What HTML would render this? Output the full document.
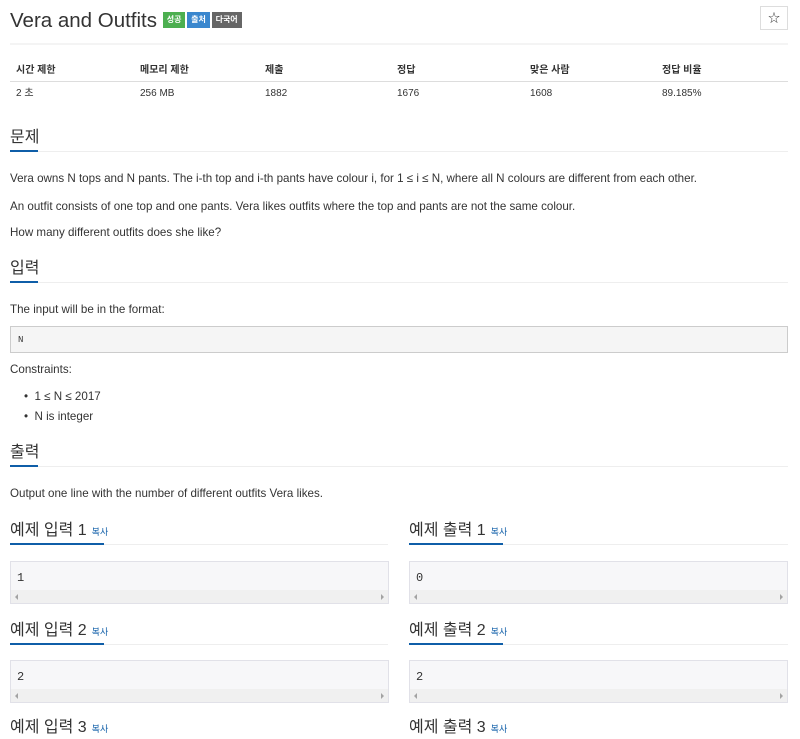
<!DOCTYPE html>
<html><head><meta charset="utf-8"><style>
*{margin:0;padding:0;box-sizing:border-box}
body{width:800px;height:726px;overflow:hidden;background:#fff;position:relative;font-family:"Liberation Sans","Noto Sans CJK KR",sans-serif;color:#333;font-size:12px}
.a{position:absolute;white-space:nowrap;line-height:1.2}
.h{font-size:16px;color:#333;line-height:20px}
.ul{position:absolute;height:1px;background:#eee}
.bl{position:absolute;height:2px;background:#0f5ea8}
.p{font-size:11.6px;color:#333;line-height:14px}
.box{position:absolute;background:#f7f7f9;border:1px solid #e1e1e8}
.box .sb{position:absolute;left:0;right:0;bottom:0;height:13px;background:#f0f0f0}
.box .t{position:absolute;left:6px;top:9px;font-family:"Liberation Mono",monospace;font-size:12px;color:#333}
.arl,.arr{position:absolute;bottom:3px;width:0;height:0;border-top:3px solid transparent;border-bottom:3px solid transparent}
.arl{left:4px;border-right:3px solid #a3a3a3}
.arr{right:4px;border-left:3px solid #a3a3a3}
.cp{font-size:9px;color:#0f5ea8;margin-left:5px}
.lb{display:inline-block;font-size:8px;color:#fff;padding:0 4px;height:16px;line-height:16px;vertical-align:middle;font-weight:bold}
.th{font-size:10px;font-weight:bold;line-height:12px}
.td{font-size:10px;line-height:12px}
</style></head><body>
<div class="a" style="left:10px;top:8px;font-size:20.5px;line-height:26px;color:#333">Vera and Outfits <span class="lb" style="background:#4caf50;position:relative;top:-2px">성공</span> <span class="lb" style="background:#3a87ce;position:relative;top:-2px;margin-left:-4px">출처</span> <span class="lb" style="background:#666;position:relative;top:-2px;margin-left:-4px">다국어</span></div>
<div class="a" style="left:760px;top:6px;width:28px;height:24px;border:1px solid #ddd;text-align:center;line-height:22px;font-size:12px">☆</div>
<div class="ul" style="left:10px;width:778px;top:43px;height:2px;background:#f4f4f4"></div>

<div class="a th" style="left:16px;top:65px">시간 제한</div>
<div class="a th" style="left:140px;top:65px">메모리 제한</div>
<div class="a th" style="left:265px;top:65px">제출</div>
<div class="a th" style="left:397px;top:65px">정답</div>
<div class="a th" style="left:530px;top:65px">맞은 사람</div>
<div class="a th" style="left:662px;top:65px">정답 비율</div>
<div class="ul" style="left:10px;width:778px;top:81px;height:1px;background:#ddd"></div>
<div class="a td" style="left:16px;top:88px">2 초</div>
<div class="a td" style="left:140px;top:88px">256 MB</div>
<div class="a td" style="left:265px;top:88px">1882</div>
<div class="a td" style="left:397px;top:88px">1676</div>
<div class="a td" style="left:530px;top:88px">1608</div>
<div class="a td" style="left:662px;top:88px">89.185%</div>

<div class="a h" style="left:10px;top:128px">문제</div>
<div class="ul" style="left:10px;width:778px;top:151px"></div>
<div class="bl" style="left:10px;width:28px;top:150px"></div>
<div class="a p" style="left:10px;top:172px">Vera owns N tops and N pants. The i-th top and i-th pants have colour i, for 1 ≤ i ≤ N, where all N colours are different from each other.</div>
<div class="a p" style="left:10px;top:200px">An outfit consists of one top and one pants. Vera likes outfits where the top and pants are not the same colour.</div>
<div class="a p" style="left:10px;top:226px">How many different outfits does she like?</div>

<div class="a h" style="left:10px;top:259px">입력</div>
<div class="ul" style="left:10px;width:778px;top:282px"></div>
<div class="bl" style="left:10px;width:28px;top:281px"></div>
<div class="a p" style="left:10px;top:303px">The input will be in the format:</div>
<div class="a" style="left:10px;top:326px;width:778px;height:27px;background:#f5f5f5;border:1px solid #ccc"><span style="position:absolute;left:7px;top:8px;font-family:'Liberation Mono',monospace;font-size:9px">N</span></div>
<div class="a p" style="left:10px;top:363px">Constraints:</div>
<div class="a p" style="left:24px;top:390px">•&nbsp;&nbsp;1 ≤ N ≤ 2017</div>
<div class="a p" style="left:24px;top:410px">•&nbsp;&nbsp;N is integer</div>

<div class="a h" style="left:10px;top:443px">출력</div>
<div class="ul" style="left:10px;width:778px;top:466px"></div>
<div class="bl" style="left:10px;width:28px;top:465px"></div>
<div class="a p" style="left:10px;top:487px">Output one line with the number of different outfits Vera likes.</div>

<div class="a h" style="left:10px;top:521px">예제 입력 1<span class="cp">복사</span></div>
<div class="ul" style="left:10px;width:378px;top:544px"></div>
<div class="bl" style="left:10px;width:94px;top:543px"></div>
<div class="box" style="left:10px;top:561px;width:379px;height:43px"><span class="t">1</span><div class="sb"></div><i class="arl"></i><i class="arr"></i></div>

<div class="a h" style="left:409px;top:521px">예제 출력 1<span class="cp">복사</span></div>
<div class="ul" style="left:409px;width:379px;top:544px"></div>
<div class="bl" style="left:409px;width:94px;top:543px"></div>
<div class="box" style="left:409px;top:561px;width:379px;height:43px"><span class="t">0</span><div class="sb"></div><i class="arl"></i><i class="arr"></i></div>

<div class="a h" style="left:10px;top:621px">예제 입력 2<span class="cp">복사</span></div>
<div class="ul" style="left:10px;width:378px;top:644px"></div>
<div class="bl" style="left:10px;width:94px;top:643px"></div>
<div class="box" style="left:10px;top:660px;width:379px;height:43px"><span class="t">2</span><div class="sb"></div><i class="arl"></i><i class="arr"></i></div>

<div class="a h" style="left:409px;top:621px">예제 출력 2<span class="cp">복사</span></div>
<div class="ul" style="left:409px;width:379px;top:644px"></div>
<div class="bl" style="left:409px;width:94px;top:643px"></div>
<div class="box" style="left:409px;top:660px;width:379px;height:43px"><span class="t">2</span><div class="sb"></div><i class="arl"></i><i class="arr"></i></div>

<div class="a h" style="left:10px;top:718px">예제 입력 3<span class="cp">복사</span></div>
<div class="a h" style="left:409px;top:718px">예제 출력 3<span class="cp">복사</span></div>
</body></html>
